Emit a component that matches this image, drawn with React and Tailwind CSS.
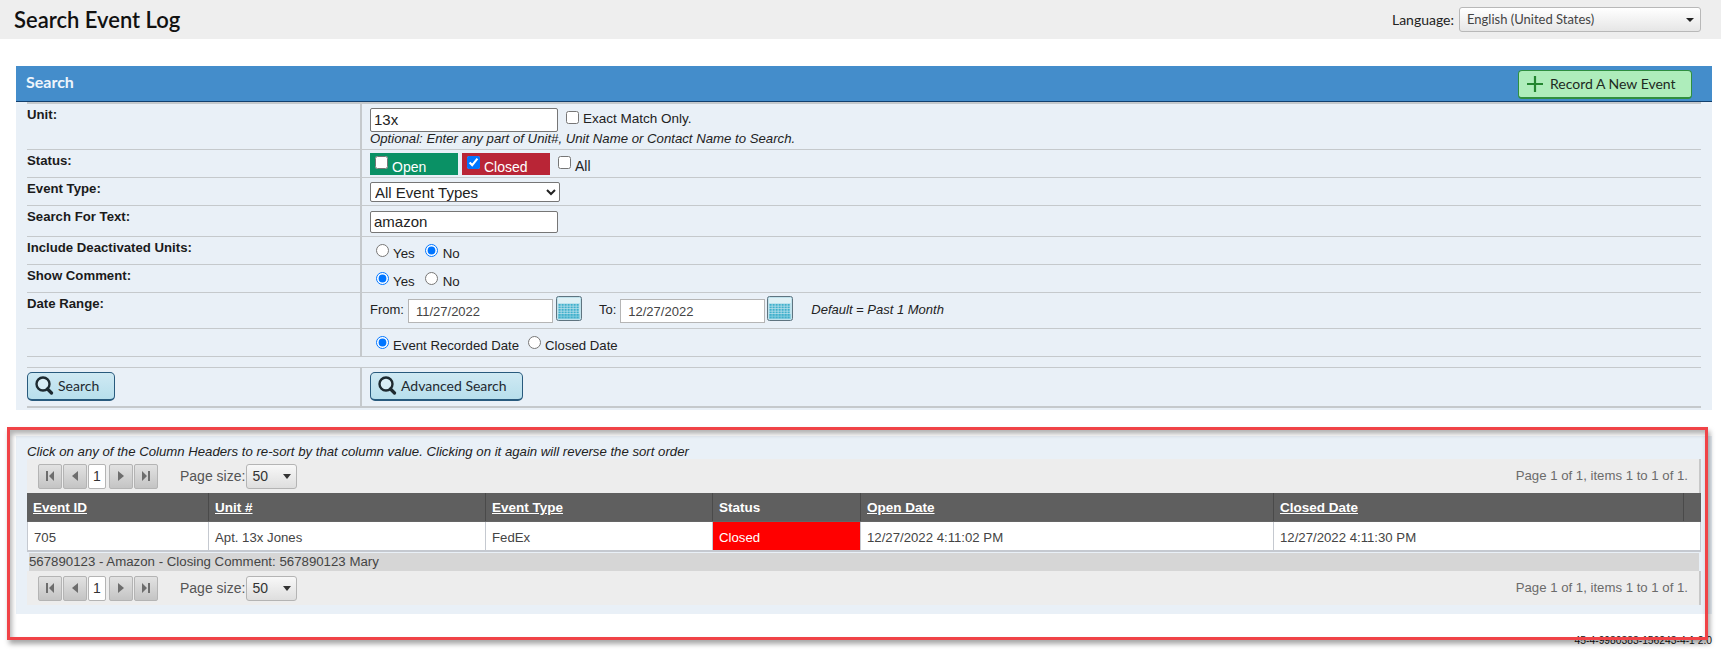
import React from 'react';

const columns = [
  { title: 'Event ID', width: 'w-[182px]', link: true },
  { title: 'Unit #', width: 'w-[277px]', link: true },
  { title: 'Event Type', width: 'w-[227px]', link: true },
  { title: 'Status', width: 'w-[148px]', link: false },
  { title: 'Open Date', width: 'w-[413px]', link: true },
  { title: 'Closed Date', width: 'flex-1', link: true },
];

const SearchIcon = () => (
  <svg width="20" height="20" viewBox="0 0 20 20" fill="none" className="shrink-0">
    <circle cx="9" cy="9" r="6.5" stroke="#1d2a30" strokeWidth="2.4" fill="#ffffff55" />
    <path d="M13.5 14l4 4" stroke="#1d2a30" strokeWidth="3.2" strokeLinecap="round" />
  </svg>
);

const CalendarIcon = () => (
  <svg width="26" height="25" viewBox="0 0 26 25" className="shrink-0">
    <rect x="0.5" y="0.5" width="25" height="24" rx="2" fill="#bfe2ec" stroke="#5f7480" />
    <rect x="2" y="2" width="22" height="5" fill="#dff0f5" />
    <rect x="2" y="18" width="22" height="5" fill="#8fd0e0" />
    {[8, 10.5, 13, 15.5, 18, 20.5].map((y) =>
      [2.5, 5.5, 8.5, 11.5, 14.5, 17.5, 20.5].map((x) => (
        <rect key={`${x}-${y}`} x={x} y={y} width="2.2" height="1.8" fill="#3fb0cc" />
      ))
    )}
  </svg>
);

const PagerIcon = ({ type }) => (
  <svg width="12" height="12" viewBox="0 0 12 12" fill="#6d6d6d">
    {type === 'first' && <path d="M2 1h2v10H2zM10 1v10L5 6z" />}
    {type === 'prev' && <path d="M9 1v10L3 6z" />}
    {type === 'next' && <path d="M3 1v10l6-5z" />}
    {type === 'last' && <path d="M8 1h2v10H8zM2 1v10l5-5z" />}
  </svg>
);

const Row = ({ label, className, children }) => (
  <div className={`grid grid-cols-[335px_1fr] border-b border-[#c5c9cc] ${className}`}>
    <div className="border-r-2 border-[#c5c9cc] pt-[3px] text-[13.2px] font-bold leading-[16px] text-[#1b1b1b]">{label}</div>
    <div className="pl-2">{children}</div>
  </div>
);

const RadioPair = ({ name, yes }) => (
  <div className="flex items-start pl-[6px] pt-[5px]">
    <input type="radio" name={name} defaultChecked={yes} className="mt-[2px] h-[13px] w-[13px] accent-[#0075ff]" />
    <span className="ml-[4px] mt-[4px] text-[13.3px] leading-[16px]">Yes</span>
    <input type="radio" name={name} defaultChecked={!yes} className="ml-[10px] mt-[2px] h-[13px] w-[13px] accent-[#0075ff]" />
    <span className="ml-[5px] mt-[4px] text-[13.3px] leading-[16px]">No</span>
  </div>
);

const Pager = () => (
  <div className="flex h-[34px] items-center border-r-2 border-[#c8c8c8] bg-[#ededed] pl-[11px] pr-[11px]">
    <div className="flex items-center gap-px">
      <button className="flex h-[25px] w-[24px] items-center justify-center rounded-[2px] border border-[#b4b4b4] bg-gradient-to-b from-[#e2e2e2] to-[#c4c4c4]"><PagerIcon type="first" /></button>
      <button className="flex h-[25px] w-[24px] items-center justify-center rounded-[2px] border border-[#b4b4b4] bg-gradient-to-b from-[#e2e2e2] to-[#c4c4c4]"><PagerIcon type="prev" /></button>
      <span className="flex h-[25px] w-[18px] items-center justify-center rounded-[2px] border border-[#b4b4b4] bg-white text-[14px] text-[#333]">1</span>
      <button className="ml-[2px] flex h-[25px] w-[24px] items-center justify-center rounded-[2px] border border-[#b4b4b4] bg-gradient-to-b from-[#e2e2e2] to-[#c4c4c4]"><PagerIcon type="next" /></button>
      <button className="flex h-[25px] w-[24px] items-center justify-center rounded-[2px] border border-[#b4b4b4] bg-gradient-to-b from-[#e2e2e2] to-[#c4c4c4]"><PagerIcon type="last" /></button>
    </div>
    <span className="ml-[22px] text-[14px] text-[#555]">Page size:</span>
    <div className="ml-px flex h-[25px] w-[51px] items-center justify-between rounded-[3px] border border-[#b4b4b4] bg-gradient-to-b from-[#f8f8f8] to-[#dedede] pl-[5px] pr-[5px] text-[14px] text-[#333]">
      50
      <span className="h-0 w-0 border-x-[4px] border-t-[5px] border-x-transparent border-t-[#333]" />
    </div>
    <span className="ml-auto text-[13.2px] text-[#6b6b6b]">Page 1 of 1, items 1 to 1 of 1.</span>
  </div>
);

const App = () => {
  return (
    <div className="relative h-[663px] overflow-hidden bg-white font-['Liberation_Sans',Arial,sans-serif] text-[#222]">
      {/* Page title */}
      <div className="flex h-[39px] items-center justify-between bg-[#eeeeee] pl-[14px] pr-[20px]">
        <h1 className="font-['Lato',sans-serif] text-[22px] font-semibold leading-[39px] text-[#111]">Search Event Log</h1>
        <div className="flex items-center gap-[5px]">
          <span className="font-['Lato',sans-serif] text-[14px] text-[#222]">Language:</span>
          <div className="flex h-[25px] w-[242px] items-center justify-between rounded-[3px] border border-[#b8b8b8] bg-gradient-to-b from-[#ffffff] to-[#e6e6e6] pl-[7px] pr-[6px] font-['Lato',sans-serif] text-[13px] text-[#444]">
            English (United States)
            <span className="h-0 w-0 border-x-[4px] border-t-[4px] border-x-transparent border-t-[#222]" />
          </div>
        </div>
      </div>

      {/* Search panel */}
      <div className="ml-4 mr-[9px] mt-[27px] bg-[#e9f0f7]">
        <div className="flex h-[36px] items-center justify-between border-b border-[#12406e] bg-[#448dcb] pl-[10px] pr-[20px]">
          <span className="mb-[4px] font-['Lato',sans-serif] text-[16px] font-bold text-[#eef5fb]">Search</span>
          <button className="mt-[1px] flex h-[29px] w-[174px] items-center gap-[6px] rounded-[4px] border border-[#2f8f3f] border-b-2 bg-[#aeedbb] pl-[7px] font-['Lato',sans-serif] text-[14px] text-[#1d2a22]">
            <svg width="18" height="18" viewBox="0 0 18 18"><path d="M9 1v16M1 9h16" stroke="#22862f" strokeWidth="2.2" /></svg>
            Record A New Event
          </button>
        </div>
        <div className="ml-[11px] mr-[11px] border-t-2 border-[#c5c9cc] pb-[2px]">
          <Row label="Unit:" className="h-[46px]">
            <div className="flex items-start pt-[4px]">
              <input defaultValue="13x" className="h-[24px] w-[188px] rounded-[2px] border border-[#767676] bg-white px-[3px] pb-[2px] text-[15px]" />
              <input type="checkbox" className="ml-[8px] mt-[3px] h-[13px] w-[13px]" />
              <span className="ml-[4px] mt-[2px] text-[13.5px] leading-[18px]">Exact Match Only.</span>
            </div>
            <p className="-mt-px text-[13.2px] italic leading-[15px]">Optional: Enter any part of Unit#, Unit Name or Contact Name to Search.</p>
          </Row>
          <Row label="Status:" className="h-[28px]">
            <div className="flex items-start pt-[3px]">
              <label className="flex h-[22px] w-[88px] items-start bg-[#0a9165] pl-[5px] pt-[3px] text-[14px] leading-[16px] text-white">
                <input type="checkbox" className="h-[13px] w-[13px]" />
                <span className="ml-[4px] mt-[3px]">Open</span>
              </label>
              <label className="ml-[4px] flex h-[22px] w-[88px] items-start bg-[#b92536] pl-[5px] pt-[3px] text-[14px] leading-[16px] text-white">
                <input type="checkbox" defaultChecked className="h-[13px] w-[13px] accent-[#0075ff]" />
                <span className="ml-[4px] mt-[3px]">Closed</span>
              </label>
              <input type="checkbox" className="ml-[8px] mt-[3px] h-[13px] w-[13px]" />
              <span className="ml-[4px] mt-[5px] text-[14px] leading-[16px]">All</span>
            </div>
          </Row>
          <Row label="Event Type:" className="h-[28px]">
            <div className="pt-[3px]">
              <select defaultValue="all" className="h-[20px] w-[190px] rounded-[2px] border border-[#767676] bg-white text-[15px] leading-[18px] appearance-auto">
                <option value="all">All Event Types</option>
              </select>
            </div>
          </Row>
          <Row label="Search For Text:" className="h-[31px]">
            <div className="pt-[4px]">
              <input defaultValue="amazon" className="h-[22px] w-[188px] rounded-[2px] border border-[#767676] bg-white px-[3px] text-[15px]" />
            </div>
          </Row>
          <Row label="Include Deactivated Units:" className="h-[28px]">
            <RadioPair name="deactivated" yes={false} />
          </Row>
          <Row label="Show Comment:" className="h-[28px]">
            <RadioPair name="comment" yes={true} />
          </Row>
          <Row label="Date Range:" className="h-[36px]">
            <div className="flex items-start pt-[3px]">
              <span className="mt-[6px] text-[13px] leading-[16px]">From:</span>
              <input defaultValue="11/27/2022" className="ml-[4px] mt-[3px] h-[24px] w-[145px] border border-[#b5b5b5] bg-white px-[7px] text-[13px] text-[#444]" />
              <span className="ml-[3px]"><CalendarIcon /></span>
              <span className="ml-[17px] mt-[6px] text-[13px] leading-[16px]">To:</span>
              <input defaultValue="12/27/2022" className="ml-[4px] mt-[3px] h-[24px] w-[145px] border border-[#b5b5b5] bg-white px-[7px] text-[13px] text-[#444]" />
              <span className="ml-[2px]"><CalendarIcon /></span>
              <span className="ml-[18px] mt-[6px] text-[13px] italic leading-[16px]">Default = Past 1 Month</span>
            </div>
          </Row>
          <Row label="" className="h-[28px]">
            <div className="flex items-start pl-[6px] pt-[5px]">
              <input type="radio" name="dateType" defaultChecked className="mt-[2px] h-[13px] w-[13px] accent-[#0075ff]" />
              <span className="ml-[4px] mt-[4px] text-[13.2px] leading-[16px]">Event Recorded Date</span>
              <input type="radio" name="dateType" className="ml-[9px] mt-[2px] h-[13px] w-[13px] accent-[#0075ff]" />
              <span className="ml-[4px] mt-[4px] text-[13.2px] leading-[16px]">Closed Date</span>
            </div>
          </Row>
          <div className="h-[11px] border-b border-[#c5c9cc]" />
          <div className="grid h-[40px] grid-cols-[335px_1fr] border-b-2 border-[#c5c9cc]">
            <div className="border-r-2 border-[#c5c9cc] pt-[4px]">
              <button className="flex h-[29px] w-[88px] items-center gap-[4px] rounded-[5px] border border-[#285a7d] border-b-2 bg-gradient-to-b from-[#cfe9f3] to-[#b7dfec] pb-[2px] pl-[6px] font-['Lato',sans-serif] text-[14px] text-[#1f2a30]">
                <SearchIcon />
                Search
              </button>
            </div>
            <div className="pl-2 pt-[4px]">
              <button className="flex h-[29px] w-[153px] items-center gap-[4px] rounded-[5px] border border-[#285a7d] border-b-2 bg-gradient-to-b from-[#cfe9f3] to-[#b7dfec] pb-[2px] pl-[6px] font-['Lato',sans-serif] text-[14px] text-[#1f2a30]">
                <SearchIcon />
                Advanced Search
              </button>
            </div>
          </div>
        </div>
      </div>

      {/* Results */}
      <div className="ml-4 mr-[9px] mt-[26px] h-[178px] bg-[#e9f0f7] pl-[11px] pr-[11px] pt-[7px]">
        <p className="h-[16px] pt-px text-[13.2px] italic leading-[16px] text-[#222]">Click on any of the Column Headers to re-sort by that column value. Clicking on it again will reverse the sort order</p>
        <Pager />
        <div className="flex h-[29px] border-b border-[#666] bg-[#5f5f5f]">
          {columns.map((col) => (
            <div key={col.title} className={`${col.width} flex items-center border-r border-[#4a4a4a] pl-[6px] pt-[2px] text-[13.5px] font-bold text-white`}>
              {col.link ? <a className="underline">{col.title}</a> : col.title}
            </div>
          ))}
          <div className="w-[17px]" />
        </div>
        <div className="flex h-[30px] border-x border-b-2 border-[#c5c9d0] bg-white text-[13.2px] text-[#444]">
          <div className="flex w-[181px] items-center border-r border-[#c5c9d0] pl-[6px] pt-[3px]">705</div>
          <div className="flex w-[277px] items-center border-r border-[#c5c9d0] pl-[6px] pt-[3px]">Apt. 13x Jones</div>
          <div className="flex w-[227px] items-center border-r border-[#c5c9d0] pl-[6px] pt-[3px]">FedEx</div>
          <div className="flex w-[148px] items-center border-r border-[#c5c9d0] bg-[#ff0000] pl-[6px] pt-[3px] text-white">Closed</div>
          <div className="flex w-[413px] items-center border-r border-[#c5c9d0] pl-[6px] pt-[3px]">12/27/2022 4:11:02 PM</div>
          <div className="flex flex-1 items-center pl-[6px] pt-[3px]">12/27/2022 4:11:30 PM</div>
        </div>
        <div className="mx-[2px] mt-[1px] flex h-[18px] items-center bg-[#d6d6d6] text-[13.25px] text-[#444]">567890123 - Amazon - Closing Comment: 567890123 Mary</div>
        <Pager />
      </div>
      <p className="mr-[9px] mt-[21px] text-right text-[10.3px] leading-[12px] text-[#111]">45-4-9980383-156243-4-1 2.0</p>

      {/* Red highlight drawn over the results */}
      <div className="pointer-events-none absolute left-[7px] top-[427px] h-[213px] w-[1701px] border-[3px] border-[#f04347] shadow-[2px_4px_5px_rgba(0,0,0,0.35),inset_2px_4px_5px_rgba(0,0,0,0.3)]" />
    </div>
  );
};

export default App;
